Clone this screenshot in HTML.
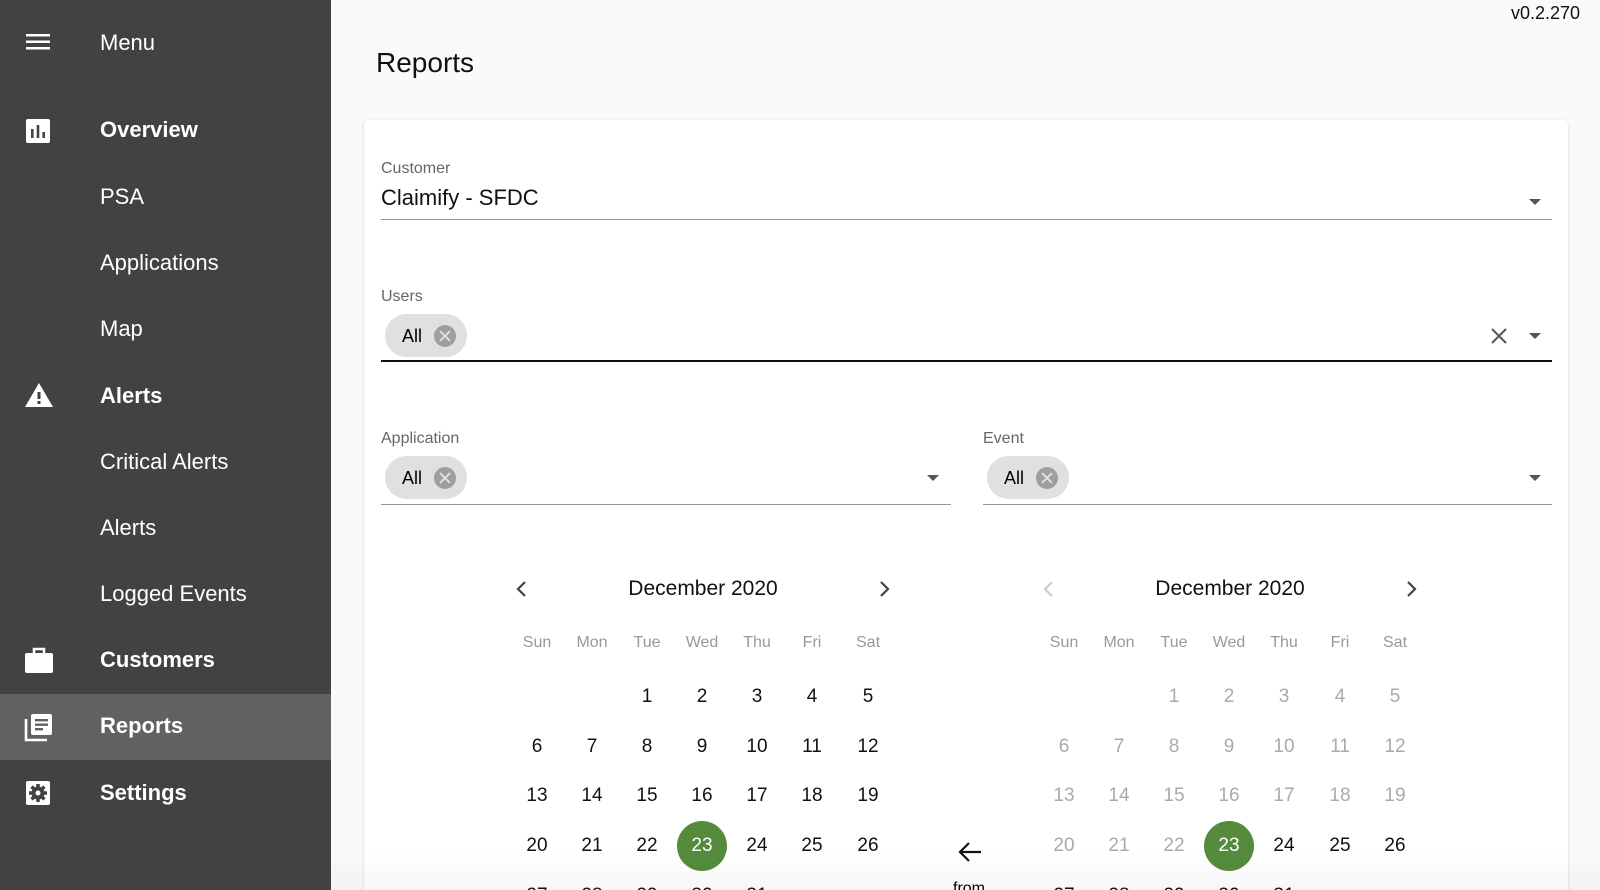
<!DOCTYPE html>
<html style="overflow:hidden;height:890px"><head><meta charset="utf-8"><style>
*{margin:0;padding:0;box-sizing:border-box}
body{width:1600px;height:890px;overflow:hidden;background:#fafafa;font-family:"Liberation Sans",Arial,sans-serif}
#w{position:relative;width:1600px;height:890px;overflow:hidden}
.sb{position:absolute;left:0;top:0;width:331px;height:890px;background:#424242;color:#fff;z-index:2}
.it{position:absolute;left:100px;font-size:22px;transform:translateY(-50%)}
.b{font-weight:bold}
.hl{position:absolute;left:0;top:694px;width:331px;height:66px;background:#616161}
.ic{position:absolute;left:24px}
.a{position:absolute}
.t{position:absolute;transform:translate(-50%,-50%);font-size:19px;white-space:nowrap}
.lab{position:absolute;font-size:16px;color:#666}
.chip{position:absolute;height:43px;width:82px;border-radius:22px;background:#e0e0e0;font-size:18px}
.chip span{position:absolute;left:17px;top:12px}
.chip i{position:absolute;left:49px;top:11px;width:22px;height:22px;border-radius:50%;background:#9e9e9e}
.chip i:before,.chip i:after{content:"";position:absolute;left:10px;top:4px;width:2px;height:14px;background:#e0e0e0;transform:rotate(45deg)}
.chip i:after{transform:rotate(-45deg)}
.dd{position:absolute;width:0;height:0;border-left:6px solid transparent;border-right:6px solid transparent;border-top:6px solid #555}
.ul{position:absolute;height:1px;background:#949494}
</style></head><body><div id="w">
<div class="sb">
<div class="hl"></div>
<svg class="ic" style="top:30px" width="28" height="24" viewBox="0 0 28 24"><rect x="2" y="4" width="24" height="2.5" fill="#fff"/><rect x="2" y="10.5" width="24" height="2.5" fill="#fff"/><rect x="2" y="17" width="24" height="2.5" fill="#fff"/></svg>
<div class="it" style="top:43px">Menu</div>
<svg class="ic" style="top:117px" width="28" height="28" viewBox="0 0 28 28"><rect x="2" y="2" width="24" height="24" rx="2" fill="#fff"/><rect x="7" y="12" width="2.6" height="9" fill="#424242"/><rect x="12.7" y="8" width="2.6" height="13" fill="#424242"/><rect x="18.4" y="15" width="2.6" height="6" fill="#424242"/></svg>
<div class="it b" style="top:130px">Overview</div>
<div class="it" style="top:197px">PSA</div>
<div class="it" style="top:263px">Applications</div>
<div class="it" style="top:329px">Map</div>
<svg class="ic" style="top:381px" width="30" height="28" viewBox="0 0 30 28"><path d="M15 2 L29 26 L1 26 Z" fill="#fff"/><rect x="13.5" y="11" width="3" height="7" fill="#424242"/><rect x="13.5" y="20" width="3" height="3" fill="#424242"/></svg>
<div class="it b" style="top:396px">Alerts</div>
<div class="it" style="top:462px">Critical Alerts</div>
<div class="it" style="top:528px">Alerts</div>
<div class="it" style="top:594px">Logged Events</div>
<svg class="ic" style="top:645px" width="30" height="30" viewBox="0 0 30 30"><rect x="1" y="8" width="28" height="20" rx="2" fill="#fff"/><path d="M10 8 V4 H20 V8" stroke="#fff" stroke-width="2.5" fill="none"/></svg>
<div class="it b" style="top:660px">Customers</div>
<svg class="ic" style="top:712px" width="30" height="30" viewBox="0 0 30 30"><path d="M2 7 V28 H23" stroke="#fff" stroke-width="2.6" fill="none"/><rect x="7" y="2" width="21" height="21" rx="2" fill="#fff"/><rect x="11" y="7" width="13" height="2.4" fill="#616161"/><rect x="11" y="11.5" width="13" height="2.4" fill="#616161"/><rect x="11" y="16" width="8" height="2.4" fill="#616161"/></svg>
<div class="it b" style="top:726px">Reports</div>
<svg class="ic" style="top:779px" width="28" height="28" viewBox="0 0 28 28"><rect x="2" y="2" width="24" height="24" rx="2" fill="#fff"/><circle cx="14" cy="14" r="6.5" fill="#424242"/><g stroke="#424242" stroke-width="3.5"><path d="M14 5V23M5 14H23M7.6 7.6L20.4 20.4M20.4 7.6L7.6 20.4"/></g><circle cx="14" cy="14" r="2.5" fill="#fff"/></svg>
<div class="it b" style="top:793px">Settings</div>
</div>

<div class="a" style="right:20px;top:3px;font-size:18px;color:#111">v0.2.270</div>
<div class="a" style="left:376px;top:47px;font-size:28px;color:#111">Reports</div>

<div class="a" style="left:364px;top:120px;width:1204px;height:800px;background:#fff;border-radius:4px;box-shadow:0 1px 3px rgba(0,0,0,.15)"></div>

<div class="lab" style="left:381px;top:160px">Customer</div>
<div class="a" style="left:381px;top:185px;font-size:22px;color:#111">Claimify - SFDC</div>
<div class="dd" style="left:1529px;top:199px"></div>
<div class="ul" style="left:381px;top:219px;width:1171px"></div>

<div class="lab" style="left:381px;top:288px">Users</div>
<div class="chip" style="left:385px;top:314px"><span>All</span><i></i></div>
<svg class="a" style="left:1489px;top:326px" width="20" height="20" viewBox="0 0 20 20"><path d="M3 3L17 17M17 3L3 17" stroke="#555" stroke-width="2"/></svg>
<div class="dd" style="left:1529px;top:333px"></div>
<div class="a" style="left:381px;top:360px;width:1171px;height:2px;background:#111"></div>

<div class="lab" style="left:381px;top:430px">Application</div>
<div class="chip" style="left:385px;top:456px"><span>All</span><i></i></div>
<div class="dd" style="left:927px;top:475px"></div>
<div class="ul" style="left:381px;top:504px;width:570px"></div>

<div class="lab" style="left:983px;top:430px">Event</div>
<div class="chip" style="left:987px;top:456px"><span>All</span><i></i></div>
<div class="dd" style="left:1529px;top:475px"></div>
<div class="ul" style="left:983px;top:504px;width:569px"></div>

<div id="cal"></div>
<svg class="a" style="left:957px;top:840px" width="26" height="24" viewBox="0 0 26 24"><path d="M24 12H3M12 3L3 12L12 21" stroke="#111" stroke-width="2.2" fill="none"/></svg>
<div class="t" style="left:969px;top:889px;font-size:16px">from</div>
<div class="a" style="left:331px;top:850px;width:1269px;height:40px;background:linear-gradient(rgba(0,0,0,0),rgba(0,0,0,.03))"></div>
</div>
<script>
var h='';
function cal(cx,xs,grey,pc){
 h+='<div class="t" style="left:'+cx+'px;top:589px;font-size:21px;color:#111">December 2020</div>';
 h+='<svg class="a" style="left:'+(cx-188)+'px;top:580px" width="14" height="18" viewBox="0 0 14 18"><path d="M10 2L3 9L10 16" stroke="'+pc+'" stroke-width="2.2" fill="none"/></svg>';
 h+='<svg class="a" style="left:'+(cx+174)+'px;top:580px" width="14" height="18" viewBox="0 0 14 18"><path d="M4 2L11 9L4 16" stroke="#444" stroke-width="2.2" fill="none"/></svg>';
 var d=['Sun','Mon','Tue','Wed','Thu','Fri','Sat'];
 for(var i=0;i<7;i++)h+='<div class="t" style="left:'+xs[i]+'px;top:643px;font-size:16px;color:#999">'+d[i]+'</div>';
 var ys=[697,747,796,846,896];
 for(var n=1;n<=31;n++){var p=n+1;var c=p%7,r=Math.floor(p/7);var col=(grey&&n<23)?'#aaa':'#111';
  if(n==23){h+='<div class="a" style="left:'+(xs[c]-25)+'px;top:'+(ys[r]-25)+'px;width:50px;height:50px;border-radius:50%;background:#558b3c"></div>';col='#fff';}
  h+='<div class="t" style="left:'+xs[c]+'px;top:'+ys[r]+'px;color:'+col+'">'+n+'</div>';}
}
cal(703,[537,592,647,702,757,812,868],false,'#444');
cal(1230,[1064,1119,1174,1229,1284,1340,1395],true,'#ccc');
document.getElementById('cal').innerHTML=h;
</script>
</body></html>
